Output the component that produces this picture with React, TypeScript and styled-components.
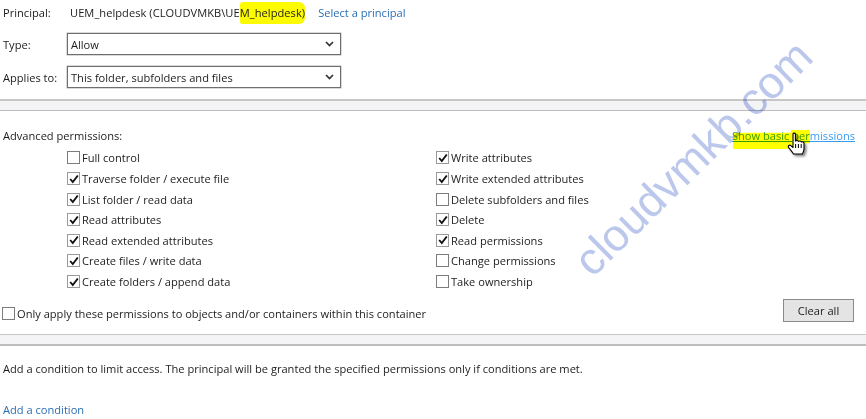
import React from "react";
import styled, { createGlobalStyle } from "styled-components";

const Global = createGlobalStyle`
  html, body { margin: 0; padding: 0; background: #fff; }
  body { font-family: "Open Sans", "Noto Sans", sans-serif; font-size: 11.1px; color: #1c1c1c; }
`;

const Page = styled.div`
  position: relative;
  width: 866px;
  height: 419px;
  overflow: hidden;
  background: #fff;
  display: flex;
  flex-direction: column;
`;

const TopSection = styled.section`
  height: 99px;
  box-sizing: border-box;
  padding: 1px 0 0 3px;
  display: flex;
  flex-direction: column;
`;

const Row = styled.div<{ $gap?: number }>`
  display: grid;
  grid-template-columns: 64px auto;
  align-items: center;
  height: 22px;
  margin-top: ${(p) => p.$gap ?? 0}px;
`;

const PrincipalValue = styled.div`
  display: flex;
  align-items: center;
  padding-left: 3px;
`;

const PrincipalName = styled.span`
  letter-spacing: 0.05px;
`;

const Mark = styled.span`
  position: relative;
  z-index: 0;
  &::before {
    content: "";
    position: absolute;
    z-index: -1;
    left: 0;
    right: 0;
    top: -3px;
    bottom: -4px;
    background: #fdfb00;
    border-radius: 3px 6px 6px 2px;
  }
`;

const Link = styled.a<{ $hover?: boolean }>`
  color: ${(p) => (p.$hover ? "#3a9cf0" : "#2a6db5")};
  text-decoration: ${(p) => (p.$hover ? "underline" : "none")};
`;

const PrincipalLink = styled(Link)`
  margin-left: 13px;
`;

const Select = styled.div`
  width: 274px;
  height: 22px;
  box-sizing: border-box;
  border: 1px solid #6f6f6f;
  box-shadow: 0 0 0 0.5px #b5b5b5;
  padding: 0 6px 0 3px;
  display: flex;
  align-items: center;
  justify-content: space-between;
  background: #fff;
`;

const Band = styled.div<{ $top: number; $bottom: number }>`
  height: 12px;
  box-sizing: border-box;
  background: #f4f3f6;
  border-top: ${(p) => p.$top}px solid #c6c6c6;
  border-bottom: ${(p) => p.$bottom}px solid #bdbdbd;
`;

const AdvancedSection = styled.section`
  height: 223px;
  box-sizing: border-box;
  padding-top: 14px;
  display: flex;
  flex-direction: column;
`;

const HeaderRow = styled.div`
  height: 20px;
  padding: 0 11px 0 3px;
  display: flex;
  align-items: center;
  justify-content: space-between;
`;

const PermGrid = styled.div`
  display: grid;
  grid-template-columns: 369px 1fr;
  grid-auto-flow: column;
  grid-template-rows: repeat(7, 20.6px);
  padding-left: 67px;
  margin-top: 2.7px;
`;

const CheckRow = styled.label`
  display: flex;
  align-items: center;
  gap: 2px;
`;

const Box = styled.span<{ $on?: boolean }>`
  width: 13px;
  height: 13px;
  box-sizing: border-box;
  flex: none;
  display: flex;
  align-items: center;
  justify-content: center;
  background: #fff;
  border: 1px solid ${(p) => (p.$on ? "#9a9a9a" : "#7c7c7c")};
  color: #111;
`;

const FooterRow = styled.div`
  margin-top: 7px;
  height: 23px;
  padding: 0 12px 0 2px;
  display: flex;
  align-items: flex-end;
  justify-content: space-between;
`;

const ScopeRow = styled(CheckRow)`
  height: 16px;
`;

const ClearButton = styled.button`
  width: 71px;
  height: 23px;
  box-sizing: border-box;
  padding: 0;
  border: 1px solid #8a8a8a;
  background: #e4e4e4;
  font: inherit;
  color: inherit;
`;

const ConditionSection = styled.section`
  padding: 15px 0 0 3px;
  display: flex;
  flex-direction: column;
  gap: 25px;
  line-height: 16px;
`;

const Highlight = styled.div`
  position: absolute;
  left: 733px;
  top: 130px;
  width: 77px;
  height: 19px;
  background: #ffff00;
  mix-blend-mode: multiply;
  clip-path: polygon(0 15%, 75% 15%, 75% 0, 100% 0, 100% 70%, 78% 70%, 78% 100%, 0 100%);
`;

const Watermark = styled.div`
  position: absolute;
  left: 693px;
  top: 158px;
  transform: translate(-50%, -50%) rotate(-44.5deg);
  font-family: "Liberation Sans", Arial, sans-serif;
  font-size: 45px;
  line-height: 1;
  color: #bcc7ec;
  white-space: nowrap;
  mix-blend-mode: multiply;
`;

const HandCursor = styled.svg`
  position: absolute;
  left: 787px;
  top: 132px;
  width: 20px;
  height: 26px;
  filter: drop-shadow(2px 2px 1px rgba(0, 0, 0, 0.45));
`;

const Chevron = () => (
  <svg width="9" height="6" viewBox="0 0 9 6" aria-hidden="true">
    <path d="M1 1 L4.5 4.5 L8 1" fill="none" stroke="#333" strokeWidth="1.7" />
  </svg>
);

const Check = () => (
  <svg width="10" height="10" viewBox="0 0 10 10" aria-hidden="true">
    <path d="M1.2 5 L3.8 8 L8.8 1.5" fill="none" stroke="currentColor" strokeWidth="1.9" />
  </svg>
);

const left: [string, boolean][] = [
  ["Full control", false],
  ["Traverse folder / execute file", true],
  ["List folder / read data", true],
  ["Read attributes", true],
  ["Read extended attributes", true],
  ["Create files / write data", true],
  ["Create folders / append data", true],
];

const right: [string, boolean][] = [
  ["Write attributes", true],
  ["Write extended attributes", true],
  ["Delete subfolders and files", false],
  ["Delete", true],
  ["Read permissions", true],
  ["Change permissions", false],
  ["Take ownership", false],
];

export default function App() {
  return (
    <Page>
      <Global />
      <TopSection>
        <Row>
          <span>Principal:</span>
          <PrincipalValue>
            <PrincipalName>
              UEM_helpdesk (CLOUDVMKB\UE<Mark>M_helpdesk)</Mark>
            </PrincipalName>
            <PrincipalLink>Select a principal</PrincipalLink>
          </PrincipalValue>
        </Row>
        <Row $gap={10}>
          <span>Type:</span>
          <Select>
            <span>Allow</span>
            <Chevron />
          </Select>
        </Row>
        <Row $gap={11}>
          <span>Applies to:</span>
          <Select>
            <span>This folder, subfolders and files</span>
            <Chevron />
          </Select>
        </Row>
      </TopSection>
      <Band $top={2} $bottom={1} />
      <AdvancedSection>
        <HeaderRow>
          <span>Advanced permissions:</span>
          <Link $hover>Show basic permissions</Link>
        </HeaderRow>
        <PermGrid>
          {[...left, ...right].map(([label, on]) => (
            <CheckRow key={label}>
              <Box $on={on}>{on && <Check />}</Box>
              <span>{label}</span>
            </CheckRow>
          ))}
        </PermGrid>
        <FooterRow>
          <ScopeRow>
            <Box />
            <span>Only apply these permissions to objects and/or containers within this container</span>
          </ScopeRow>
          <ClearButton>Clear all</ClearButton>
        </FooterRow>
      </AdvancedSection>
      <Band $top={1} $bottom={2} />
      <ConditionSection>
        <span>Add a condition to limit access. The principal will be granted the specified permissions only if conditions are met.</span>
        <Link>Add a condition</Link>
      </ConditionSection>
      <Highlight />
      <Watermark>cloudvmkb.com</Watermark>
      <HandCursor viewBox="0 0 20 26" aria-hidden="true">
        <path
          d="M6 2 C6 0.8 8.4 0.8 8.4 2 L8.4 9 C9.6 8.2 11 8.4 11.4 9.4 C12.6 8.6 14 9 14.4 10 C15.6 9.4 17 10 17 11.4 L17 17 C17 19 16 20.5 15.4 22 L6.5 22 C5.5 20 3.5 18 1.5 15.4 C0.6 14 2.4 12.4 3.8 13.6 L6 15.5 Z"
          fill="#fff"
          stroke="#000"
          strokeWidth="1.1"
          strokeLinejoin="round"
        />
        <path d="M8.6 12 V16 M11.4 12 V16 M14.2 12 V16" stroke="#000" strokeWidth="1" />
      </HandCursor>
    </Page>
  );
}
